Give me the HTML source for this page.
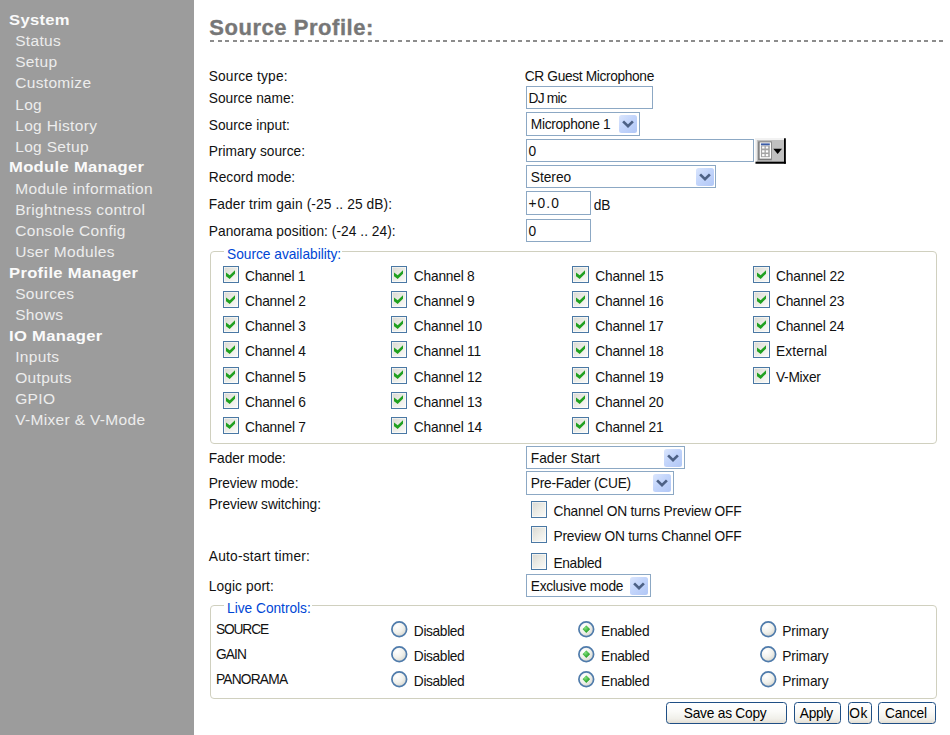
<!DOCTYPE html>
<html><head><meta charset="utf-8"><title>Source Profile</title><style>
*{margin:0;padding:0;box-sizing:border-box}
html,body{width:950px;height:735px;overflow:hidden;background:#fff}
body{position:relative;font-family:"Liberation Sans",sans-serif;}
#side{position:absolute;left:0;top:0;width:193.8px;height:735px;background:#9c9c9c}
.sh,.si{position:absolute;line-height:1;white-space:nowrap;color:#f2f2f2}
.sh{left:9.0px;font-size:15.5px;font-weight:bold;color:#fafafa;letter-spacing:0.3px;transform:scaleX(1.07);transform-origin:0 0}
.si{left:15.2px;font-size:15.5px;letter-spacing:0.33px;color:#ededed}
.t{position:absolute;font-size:13.75px;line-height:1;white-space:nowrap;color:#111}
.title{position:absolute;left:209.2px;top:16.6px;font-size:22px;line-height:1;font-weight:bold;color:#777;letter-spacing:0.55px;white-space:nowrap;-webkit-text-stroke:0.35px #777}
.dash{position:absolute;left:209.5px;top:40px;width:733px;height:1.9px;background:repeating-linear-gradient(90deg,#8c8c8c 0 4px,transparent 4px 7.52px)}
.inp,.sel{position:absolute;border:1.4px solid #8ca8c4;background:#fff}
.sel .btn{position:absolute;right:1.6px;top:1.6px;width:18px;height:18px;border-radius:2.5px;background:linear-gradient(135deg,#dbe6fd 0%,#c3d5fb 45%,#b1c7f6 100%)}
.sel .btn svg{position:absolute;left:0;top:0}
.calc{position:absolute}
.fs{position:absolute;border:1.5px solid #d0d0bf;border-radius:4px}
.lg{position:absolute;background:#fff;padding:0 1px 0 3.1px;font-size:13.75px;line-height:1;color:#0046d5;white-space:nowrap;letter-spacing:-0.03px}
.cb{position:absolute;width:16.8px;height:17px;border:1.5px solid #4a78a4;background:linear-gradient(135deg,#d8d8d2 0%,#ececE6 50%,#fbfbf9 100%);box-shadow:inset 0 0 0 0.5px #fff}
.cb svg{position:absolute;left:-1.5px;top:-1.5px}
.rd{position:absolute;width:17px;height:17px}
.rd svg{display:block}
.b{position:absolute;height:22.4px;border:1.6px solid #1f4f85;border-radius:3.5px;background:linear-gradient(180deg,#ffffff 0%,#fbfbf9 40%,#f0efe9 80%,#e2ded3 100%);font-size:13.75px;line-height:21px;text-align:center;padding-right:2px;color:#000;white-space:nowrap}
</style></head>
<body><div id="side"></div>
<div class="sh" style="top:11.90px">System</div>
<div class="si" style="top:33.35px">Status</div>
<div class="si" style="top:54.40px">Setup</div>
<div class="si" style="top:75.45px">Customize</div>
<div class="si" style="top:96.50px">Log</div>
<div class="si" style="top:117.55px">Log History</div>
<div class="si" style="top:138.60px">Log Setup</div>
<div class="sh" style="top:159.25px">Module Manager</div>
<div class="si" style="top:180.70px">Module information</div>
<div class="si" style="top:201.75px">Brightness control</div>
<div class="si" style="top:222.80px">Console Config</div>
<div class="si" style="top:243.85px">User Modules</div>
<div class="sh" style="top:264.50px">Profile Manager</div>
<div class="si" style="top:285.95px">Sources</div>
<div class="si" style="top:307.00px">Shows</div>
<div class="sh" style="top:327.65px">IO Manager</div>
<div class="si" style="top:349.10px">Inputs</div>
<div class="si" style="top:370.15px">Outputs</div>
<div class="si" style="top:391.20px">GPIO</div>
<div class="si" style="top:412.25px">V-Mixer &amp; V-Mode</div>
<div class="title">Source Profile:</div>
<div class="dash"></div>
<div class="t" style="left:208.75px;top:69.70px;letter-spacing:0.14px">Source type:</div>
<div class="t" style="left:208.75px;top:92.20px;letter-spacing:0.0px">Source name:</div>
<div class="t" style="left:208.75px;top:118.80px;letter-spacing:0.0px">Source input:</div>
<div class="t" style="left:208.75px;top:144.70px;letter-spacing:0.0px">Primary source:</div>
<div class="t" style="left:208.75px;top:171.00px;letter-spacing:0.0px">Record mode:</div>
<div class="t" style="left:208.75px;top:197.70px;letter-spacing:0.1px">Fader trim gain (-25 .. 25 dB):</div>
<div class="t" style="left:208.75px;top:224.80px;letter-spacing:0.04px">Panorama position: (-24 .. 24):</div>
<div class="t" style="left:208.75px;top:451.60px;letter-spacing:-0.08px">Fader mode:</div>
<div class="t" style="left:208.75px;top:476.90px;letter-spacing:-0.1px">Preview mode:</div>
<div class="t" style="left:208.75px;top:498.10px;letter-spacing:-0.05px">Preview switching:</div>
<div class="t" style="left:208.75px;top:549.80px;letter-spacing:0.21px">Auto-start timer:</div>
<div class="t" style="left:208.75px;top:580.40px;letter-spacing:0.09px">Logic port:</div>
<div class="t" style="left:524.75px;top:69.70px;letter-spacing:-0.36px">CR Guest Microphone</div>
<div class="inp" style="left:525.7px;top:85.7px;width:127.8px;height:23.5px"></div>
<div class="t" style="left:528.45px;top:91.80px;letter-spacing:-0.6px;word-spacing:-0.5px">DJ mic</div>
<div class="sel" style="left:525.7px;top:112.1px;width:114.3px;height:23.5px"><div class="btn"><svg width="18" height="18" viewBox="0 0 18 18"><path d="M4.1 6.4 L9 11.2 L13.9 6.4" fill="none" stroke="#4d6185" stroke-width="2.7"/></svg></div></div>
<div class="t" style="left:530.75px;top:117.70px;letter-spacing:-0.31px">Microphone 1</div>
<div class="inp" style="left:525.7px;top:138.6px;width:228.3px;height:23.3px"></div>
<div class="t" style="left:528.45px;top:144.70px;letter-spacing:0.0px">0</div>
<svg class="calc" style="left:755px;top:137.5px" width="31" height="26" viewBox="0 0 31 26">
<rect x="0" y="0" width="30.8" height="25.7" fill="#c0c0c0"/>
<rect x="0" y="0" width="30.8" height="2" fill="#f2f2f2"/>
<rect x="0" y="0" width="1.8" height="25.7" fill="#f2f2f2"/>
<rect x="29" y="0.3" width="1.8" height="25.4" fill="#000"/>
<rect x="0.5" y="23.7" width="30.3" height="2" fill="#000"/>
<rect x="3.1" y="3.4" width="13.65" height="18.8" fill="#7c7c7c"/>
<rect x="4.7" y="4.4" width="11.3" height="16.2" fill="#fff"/>
<rect x="5.9" y="5.4" width="8.9" height="2" fill="#3b5ca8"/>
<rect x="5.9" y="7.6" width="8.9" height="11.6" fill="#a4a4a4"/>
<rect x="7.1" y="8.5" width="2.4" height="2" fill="#fff"/><rect x="10.8" y="8.5" width="2.4" height="2" fill="#fff"/>
<rect x="7.1" y="12.3" width="2.4" height="2.2" fill="#fff"/><rect x="10.8" y="12.3" width="2.4" height="2.2" fill="#fff"/>
<rect x="7.1" y="16.1" width="2.4" height="2.1" fill="#fff"/><rect x="10.8" y="16.1" width="2.4" height="2.1" fill="#fff"/>
<path d="M18.3 10.7 H27 L22.65 15.9 Z" fill="#000"/>
</svg>
<div class="sel" style="left:525.7px;top:165.2px;width:190.5px;height:23.2px"><div class="btn"><svg width="18" height="18" viewBox="0 0 18 18"><path d="M4.1 6.4 L9 11.2 L13.9 6.4" fill="none" stroke="#4d6185" stroke-width="2.7"/></svg></div></div>
<div class="t" style="left:530.75px;top:170.80px;letter-spacing:-0.02px">Stereo</div>
<div class="inp" style="left:525.7px;top:191.2px;width:65px;height:23.5px"></div>
<div class="t" style="left:528.45px;top:197.30px;letter-spacing:1.13px">+0.0</div>
<div class="t" style="left:593.85px;top:198.60px;letter-spacing:-0.3px">dB</div>
<div class="inp" style="left:525.7px;top:218.7px;width:65px;height:23.5px"></div>
<div class="t" style="left:528.45px;top:224.80px;letter-spacing:0.0px">0</div>
<div class="fs" style="left:210px;top:251.1px;width:726.5px;height:193px"></div>
<div class="lg" style="left:224px;top:247.6px">Source availability:</div>
<div class="cb" style="left:222.5px;top:266.00px"><svg width="17" height="17" viewBox="0 0 17 17"><path d="M4.0 6.6 L7.7 9.3 L13.0 4.2 L13.0 7.7 L7.7 12.9 L4.0 10.3 Z" fill="#21a121"/></svg></div>
<div class="t" style="left:245.05px;top:270.00px;letter-spacing:-0.3px">Channel 1</div>
<div class="cb" style="left:222.5px;top:291.15px"><svg width="17" height="17" viewBox="0 0 17 17"><path d="M4.0 6.6 L7.7 9.3 L13.0 4.2 L13.0 7.7 L7.7 12.9 L4.0 10.3 Z" fill="#21a121"/></svg></div>
<div class="t" style="left:245.05px;top:295.15px;letter-spacing:-0.22px">Channel 2</div>
<div class="cb" style="left:222.5px;top:316.30px"><svg width="17" height="17" viewBox="0 0 17 17"><path d="M4.0 6.6 L7.7 9.3 L13.0 4.2 L13.0 7.7 L7.7 12.9 L4.0 10.3 Z" fill="#21a121"/></svg></div>
<div class="t" style="left:245.05px;top:320.30px;letter-spacing:-0.22px">Channel 3</div>
<div class="cb" style="left:222.5px;top:341.45px"><svg width="17" height="17" viewBox="0 0 17 17"><path d="M4.0 6.6 L7.7 9.3 L13.0 4.2 L13.0 7.7 L7.7 12.9 L4.0 10.3 Z" fill="#21a121"/></svg></div>
<div class="t" style="left:245.05px;top:345.45px;letter-spacing:-0.22px">Channel 4</div>
<div class="cb" style="left:222.5px;top:366.60px"><svg width="17" height="17" viewBox="0 0 17 17"><path d="M4.0 6.6 L7.7 9.3 L13.0 4.2 L13.0 7.7 L7.7 12.9 L4.0 10.3 Z" fill="#21a121"/></svg></div>
<div class="t" style="left:245.05px;top:370.60px;letter-spacing:-0.22px">Channel 5</div>
<div class="cb" style="left:222.5px;top:391.75px"><svg width="17" height="17" viewBox="0 0 17 17"><path d="M4.0 6.6 L7.7 9.3 L13.0 4.2 L13.0 7.7 L7.7 12.9 L4.0 10.3 Z" fill="#21a121"/></svg></div>
<div class="t" style="left:245.05px;top:395.75px;letter-spacing:-0.22px">Channel 6</div>
<div class="cb" style="left:222.5px;top:416.90px"><svg width="17" height="17" viewBox="0 0 17 17"><path d="M4.0 6.6 L7.7 9.3 L13.0 4.2 L13.0 7.7 L7.7 12.9 L4.0 10.3 Z" fill="#21a121"/></svg></div>
<div class="t" style="left:245.05px;top:420.90px;letter-spacing:-0.22px">Channel 7</div>
<div class="cb" style="left:390.7px;top:266.00px"><svg width="17" height="17" viewBox="0 0 17 17"><path d="M4.0 6.6 L7.7 9.3 L13.0 4.2 L13.0 7.7 L7.7 12.9 L4.0 10.3 Z" fill="#21a121"/></svg></div>
<div class="t" style="left:413.85px;top:270.00px;letter-spacing:-0.22px">Channel 8</div>
<div class="cb" style="left:390.7px;top:291.15px"><svg width="17" height="17" viewBox="0 0 17 17"><path d="M4.0 6.6 L7.7 9.3 L13.0 4.2 L13.0 7.7 L7.7 12.9 L4.0 10.3 Z" fill="#21a121"/></svg></div>
<div class="t" style="left:413.85px;top:295.15px;letter-spacing:-0.22px">Channel 9</div>
<div class="cb" style="left:390.7px;top:316.30px"><svg width="17" height="17" viewBox="0 0 17 17"><path d="M4.0 6.6 L7.7 9.3 L13.0 4.2 L13.0 7.7 L7.7 12.9 L4.0 10.3 Z" fill="#21a121"/></svg></div>
<div class="t" style="left:413.85px;top:320.30px;letter-spacing:-0.22px">Channel 10</div>
<div class="cb" style="left:390.7px;top:341.45px"><svg width="17" height="17" viewBox="0 0 17 17"><path d="M4.0 6.6 L7.7 9.3 L13.0 4.2 L13.0 7.7 L7.7 12.9 L4.0 10.3 Z" fill="#21a121"/></svg></div>
<div class="t" style="left:413.85px;top:345.45px;letter-spacing:-0.22px">Channel 11</div>
<div class="cb" style="left:390.7px;top:366.60px"><svg width="17" height="17" viewBox="0 0 17 17"><path d="M4.0 6.6 L7.7 9.3 L13.0 4.2 L13.0 7.7 L7.7 12.9 L4.0 10.3 Z" fill="#21a121"/></svg></div>
<div class="t" style="left:413.85px;top:370.60px;letter-spacing:-0.22px">Channel 12</div>
<div class="cb" style="left:390.7px;top:391.75px"><svg width="17" height="17" viewBox="0 0 17 17"><path d="M4.0 6.6 L7.7 9.3 L13.0 4.2 L13.0 7.7 L7.7 12.9 L4.0 10.3 Z" fill="#21a121"/></svg></div>
<div class="t" style="left:413.85px;top:395.75px;letter-spacing:-0.22px">Channel 13</div>
<div class="cb" style="left:390.7px;top:416.90px"><svg width="17" height="17" viewBox="0 0 17 17"><path d="M4.0 6.6 L7.7 9.3 L13.0 4.2 L13.0 7.7 L7.7 12.9 L4.0 10.3 Z" fill="#21a121"/></svg></div>
<div class="t" style="left:413.85px;top:420.90px;letter-spacing:-0.22px">Channel 14</div>
<div class="cb" style="left:572.2px;top:266.00px"><svg width="17" height="17" viewBox="0 0 17 17"><path d="M4.0 6.6 L7.7 9.3 L13.0 4.2 L13.0 7.7 L7.7 12.9 L4.0 10.3 Z" fill="#21a121"/></svg></div>
<div class="t" style="left:595.25px;top:270.00px;letter-spacing:-0.22px">Channel 15</div>
<div class="cb" style="left:572.2px;top:291.15px"><svg width="17" height="17" viewBox="0 0 17 17"><path d="M4.0 6.6 L7.7 9.3 L13.0 4.2 L13.0 7.7 L7.7 12.9 L4.0 10.3 Z" fill="#21a121"/></svg></div>
<div class="t" style="left:595.25px;top:295.15px;letter-spacing:-0.22px">Channel 16</div>
<div class="cb" style="left:572.2px;top:316.30px"><svg width="17" height="17" viewBox="0 0 17 17"><path d="M4.0 6.6 L7.7 9.3 L13.0 4.2 L13.0 7.7 L7.7 12.9 L4.0 10.3 Z" fill="#21a121"/></svg></div>
<div class="t" style="left:595.25px;top:320.30px;letter-spacing:-0.22px">Channel 17</div>
<div class="cb" style="left:572.2px;top:341.45px"><svg width="17" height="17" viewBox="0 0 17 17"><path d="M4.0 6.6 L7.7 9.3 L13.0 4.2 L13.0 7.7 L7.7 12.9 L4.0 10.3 Z" fill="#21a121"/></svg></div>
<div class="t" style="left:595.25px;top:345.45px;letter-spacing:-0.22px">Channel 18</div>
<div class="cb" style="left:572.2px;top:366.60px"><svg width="17" height="17" viewBox="0 0 17 17"><path d="M4.0 6.6 L7.7 9.3 L13.0 4.2 L13.0 7.7 L7.7 12.9 L4.0 10.3 Z" fill="#21a121"/></svg></div>
<div class="t" style="left:595.25px;top:370.60px;letter-spacing:-0.22px">Channel 19</div>
<div class="cb" style="left:572.2px;top:391.75px"><svg width="17" height="17" viewBox="0 0 17 17"><path d="M4.0 6.6 L7.7 9.3 L13.0 4.2 L13.0 7.7 L7.7 12.9 L4.0 10.3 Z" fill="#21a121"/></svg></div>
<div class="t" style="left:595.25px;top:395.75px;letter-spacing:-0.22px">Channel 20</div>
<div class="cb" style="left:572.2px;top:416.90px"><svg width="17" height="17" viewBox="0 0 17 17"><path d="M4.0 6.6 L7.7 9.3 L13.0 4.2 L13.0 7.7 L7.7 12.9 L4.0 10.3 Z" fill="#21a121"/></svg></div>
<div class="t" style="left:595.25px;top:420.90px;letter-spacing:-0.22px">Channel 21</div>
<div class="cb" style="left:753.4px;top:266.00px"><svg width="17" height="17" viewBox="0 0 17 17"><path d="M4.0 6.6 L7.7 9.3 L13.0 4.2 L13.0 7.7 L7.7 12.9 L4.0 10.3 Z" fill="#21a121"/></svg></div>
<div class="t" style="left:775.95px;top:270.00px;letter-spacing:-0.17px">Channel 22</div>
<div class="cb" style="left:753.4px;top:291.15px"><svg width="17" height="17" viewBox="0 0 17 17"><path d="M4.0 6.6 L7.7 9.3 L13.0 4.2 L13.0 7.7 L7.7 12.9 L4.0 10.3 Z" fill="#21a121"/></svg></div>
<div class="t" style="left:775.95px;top:295.15px;letter-spacing:-0.22px">Channel 23</div>
<div class="cb" style="left:753.4px;top:316.30px"><svg width="17" height="17" viewBox="0 0 17 17"><path d="M4.0 6.6 L7.7 9.3 L13.0 4.2 L13.0 7.7 L7.7 12.9 L4.0 10.3 Z" fill="#21a121"/></svg></div>
<div class="t" style="left:775.95px;top:320.30px;letter-spacing:-0.22px">Channel 24</div>
<div class="cb" style="left:753.4px;top:341.45px"><svg width="17" height="17" viewBox="0 0 17 17"><path d="M4.0 6.6 L7.7 9.3 L13.0 4.2 L13.0 7.7 L7.7 12.9 L4.0 10.3 Z" fill="#21a121"/></svg></div>
<div class="t" style="left:775.95px;top:345.45px;letter-spacing:0.11px">External</div>
<div class="cb" style="left:753.4px;top:366.60px"><svg width="17" height="17" viewBox="0 0 17 17"><path d="M4.0 6.6 L7.7 9.3 L13.0 4.2 L13.0 7.7 L7.7 12.9 L4.0 10.3 Z" fill="#21a121"/></svg></div>
<div class="t" style="left:775.95px;top:370.60px;letter-spacing:-0.27px">V-Mixer</div>
<div class="sel" style="left:525.7px;top:446.1px;width:159.3px;height:23.2px"><div class="btn"><svg width="18" height="18" viewBox="0 0 18 18"><path d="M4.1 6.4 L9 11.2 L13.9 6.4" fill="none" stroke="#4d6185" stroke-width="2.7"/></svg></div></div>
<div class="t" style="left:530.75px;top:451.70px;letter-spacing:0.02px">Fader Start</div>
<div class="sel" style="left:525.7px;top:471.4px;width:148.3px;height:23.2px"><div class="btn"><svg width="18" height="18" viewBox="0 0 18 18"><path d="M4.1 6.4 L9 11.2 L13.9 6.4" fill="none" stroke="#4d6185" stroke-width="2.7"/></svg></div></div>
<div class="t" style="left:530.75px;top:477.00px;letter-spacing:-0.25px">Pre-Fader (CUE)</div>
<div class="cb" style="left:530.5px;top:501.0px"></div>
<div class="t" style="left:553.45px;top:504.90px;letter-spacing:-0.22px">Channel ON turns Preview OFF</div>
<div class="cb" style="left:530.5px;top:526.3px"></div>
<div class="t" style="left:553.45px;top:530.20px;letter-spacing:-0.22px">Preview ON turns Channel OFF</div>
<div class="cb" style="left:530.5px;top:552.6px"></div>
<div class="t" style="left:553.45px;top:556.50px;letter-spacing:-0.33px">Enabled</div>
<div class="sel" style="left:525.7px;top:574.2px;width:125.3px;height:23.2px"><div class="btn"><svg width="18" height="18" viewBox="0 0 18 18"><path d="M4.1 6.4 L9 11.2 L13.9 6.4" fill="none" stroke="#4d6185" stroke-width="2.7"/></svg></div></div>
<div class="t" style="left:530.75px;top:579.80px;letter-spacing:-0.28px">Exclusive mode</div>
<div class="fs" style="left:210px;top:605px;width:726.5px;height:93.5px"></div>
<div class="lg" style="left:224px;top:601.7px">Live Controls:</div>
<svg style="position:absolute;width:0;height:0" width="0" height="0"><defs><radialGradient id="rg" cx="0.35" cy="0.3" r="0.75"><stop offset="0" stop-color="#ffffff"/><stop offset="0.55" stop-color="#f1f1ec"/><stop offset="1" stop-color="#d6d6ce"/></radialGradient><radialGradient id="gg" cx="0.35" cy="0.3" r="0.8"><stop offset="0" stop-color="#7fe07a"/><stop offset="1" stop-color="#1f9a1f"/></radialGradient></defs></svg>
<div class="t" style="left:215.95px;top:622.80px;letter-spacing:-1.12px">SOURCE</div>
<div class="rd" style="left:391.1px;top:621.1px"><svg width="17" height="17" viewBox="0 0 17 17"><circle cx="8.25" cy="8.25" r="7.35" fill="url(#rg)" stroke="#4f7bab" stroke-width="1.7"/></svg></div>
<div class="t" style="left:413.85px;top:625.00px;letter-spacing:-0.37px">Disabled</div>
<div class="rd" style="left:578.3px;top:621.1px"><svg width="17" height="17" viewBox="0 0 17 17"><circle cx="8.25" cy="8.25" r="7.35" fill="url(#rg)" stroke="#4f7bab" stroke-width="1.7"/><path d="M8.3 5.2 L11.3 8.2 L8.3 11.2 L5.3 8.2 Z" fill="url(#gg)" stroke="url(#gg)" stroke-width="1.2" stroke-linejoin="round"/></svg></div>
<div class="t" style="left:601.05px;top:625.00px;letter-spacing:-0.33px">Enabled</div>
<div class="rd" style="left:759.6px;top:621.1px"><svg width="17" height="17" viewBox="0 0 17 17"><circle cx="8.25" cy="8.25" r="7.35" fill="url(#rg)" stroke="#4f7bab" stroke-width="1.7"/></svg></div>
<div class="t" style="left:782.35px;top:625.00px;letter-spacing:-0.18px">Primary</div>
<div class="t" style="left:215.95px;top:647.80px;letter-spacing:-0.9px">GAIN</div>
<div class="rd" style="left:391.1px;top:646.1px"><svg width="17" height="17" viewBox="0 0 17 17"><circle cx="8.25" cy="8.25" r="7.35" fill="url(#rg)" stroke="#4f7bab" stroke-width="1.7"/></svg></div>
<div class="t" style="left:413.85px;top:650.00px;letter-spacing:-0.37px">Disabled</div>
<div class="rd" style="left:578.3px;top:646.1px"><svg width="17" height="17" viewBox="0 0 17 17"><circle cx="8.25" cy="8.25" r="7.35" fill="url(#rg)" stroke="#4f7bab" stroke-width="1.7"/><path d="M8.3 5.2 L11.3 8.2 L8.3 11.2 L5.3 8.2 Z" fill="url(#gg)" stroke="url(#gg)" stroke-width="1.2" stroke-linejoin="round"/></svg></div>
<div class="t" style="left:601.05px;top:650.00px;letter-spacing:-0.33px">Enabled</div>
<div class="rd" style="left:759.6px;top:646.1px"><svg width="17" height="17" viewBox="0 0 17 17"><circle cx="8.25" cy="8.25" r="7.35" fill="url(#rg)" stroke="#4f7bab" stroke-width="1.7"/></svg></div>
<div class="t" style="left:782.35px;top:650.00px;letter-spacing:-0.18px">Primary</div>
<div class="t" style="left:215.95px;top:672.80px;letter-spacing:-0.79px">PANORAMA</div>
<div class="rd" style="left:391.1px;top:671.1px"><svg width="17" height="17" viewBox="0 0 17 17"><circle cx="8.25" cy="8.25" r="7.35" fill="url(#rg)" stroke="#4f7bab" stroke-width="1.7"/></svg></div>
<div class="t" style="left:413.85px;top:675.00px;letter-spacing:-0.37px">Disabled</div>
<div class="rd" style="left:578.3px;top:671.1px"><svg width="17" height="17" viewBox="0 0 17 17"><circle cx="8.25" cy="8.25" r="7.35" fill="url(#rg)" stroke="#4f7bab" stroke-width="1.7"/><path d="M8.3 5.2 L11.3 8.2 L8.3 11.2 L5.3 8.2 Z" fill="url(#gg)" stroke="url(#gg)" stroke-width="1.2" stroke-linejoin="round"/></svg></div>
<div class="t" style="left:601.05px;top:675.00px;letter-spacing:-0.33px">Enabled</div>
<div class="rd" style="left:759.6px;top:671.1px"><svg width="17" height="17" viewBox="0 0 17 17"><circle cx="8.25" cy="8.25" r="7.35" fill="url(#rg)" stroke="#4f7bab" stroke-width="1.7"/></svg></div>
<div class="t" style="left:782.35px;top:675.00px;letter-spacing:-0.18px">Primary</div>
<div class="b" style="left:665.5px;top:701.9px;width:121.3px;letter-spacing:-0.24px">Save as Copy</div>
<div class="b" style="left:793.6px;top:701.9px;width:47.6px;letter-spacing:-0.22px">Apply</div>
<div class="b" style="left:847.6px;top:701.9px;width:24.0px;letter-spacing:0.6px">Ok</div>
<div class="b" style="left:878.2px;top:701.9px;width:57.5px;letter-spacing:-0.16px">Cancel</div>
</body></html>
